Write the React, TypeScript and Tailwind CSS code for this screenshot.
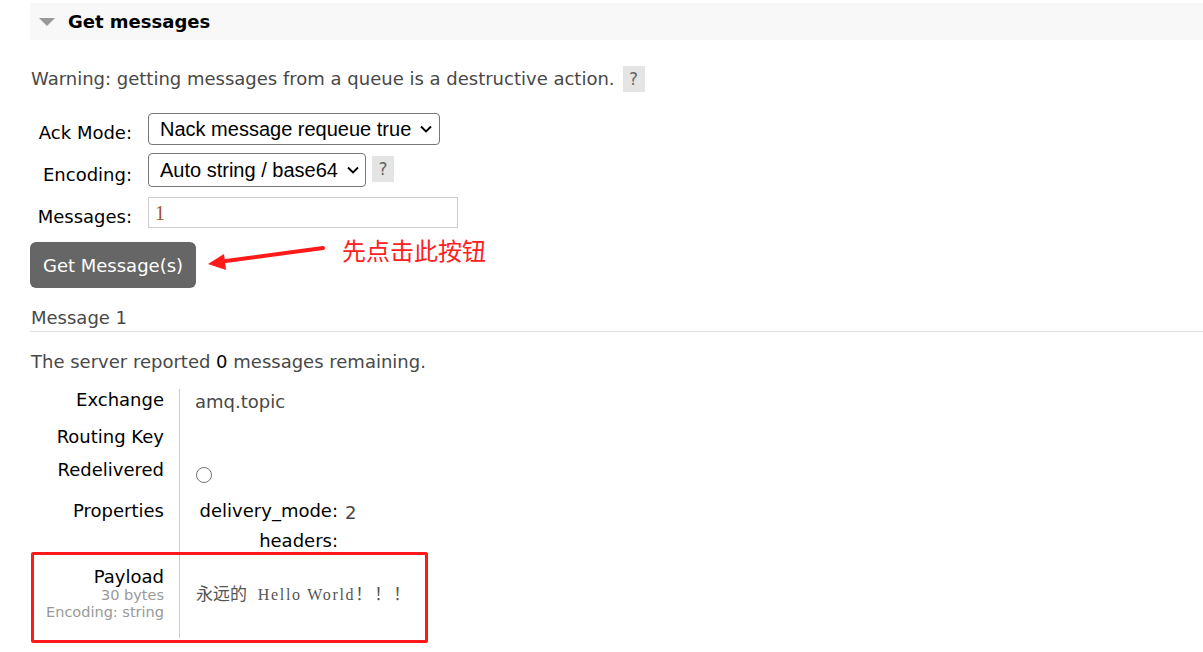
import React from "react";

const V = { fontFamily: '"DejaVu Sans", Verdana, sans-serif' };
const A = { fontFamily: '"Liberation Sans", Arial, sans-serif' };
const CJK = { fontFamily: '"Noto Sans CJK SC", sans-serif' };
const SERIF = { fontFamily: '"Liberation Serif", "Noto Sans CJK SC", serif' };

function Chevron() {
  return (
    <svg width="14" height="10" viewBox="0 0 14 10" className="ml-2">
      <path d="M2 2.5 L7 7.5 L12 2.5" fill="none" stroke="#000" strokeWidth="1.8" />
    </svg>
  );
}

function Help() {
  return (
    <span className="inline-flex items-center justify-center w-[22px] h-[26px] bg-[#e4e4e4] text-[#666] text-[17px]" style={V}>?</span>
  );
}

export default function App() {
  return (
    <div className="w-[1203px] h-[652px] bg-white overflow-hidden relative" style={V}>
      {/* header */}
      <div className="mt-[3px] ml-[30px] h-[37px] bg-[#f8f8f8] flex items-center">
        <svg width="16" height="10" viewBox="0 0 16 10" className="ml-[9px]">
          <path d="M0 1 L16 1 L8 9 Z" fill="#999" />
        </svg>
        <span className="ml-[13px] text-[18px] font-bold text-black">Get messages</span>
      </div>

      {/* warning */}
      <div className="mt-[25px] ml-[31px] flex items-center gap-[8px] text-[18px] leading-[26px] text-[#484848]">
        <span className="pt-[1px]">Warning: getting messages from a queue is a destructive action.</span>
        <Help />
      </div>

      {/* form */}
      <div className="mt-[21px] ml-[30px] flex flex-col text-[18px] leading-[22px] text-black">
        <div className="flex items-start">
          <div className="w-[102px] h-[32px] flex items-center justify-end pt-[8px]">Ack Mode:</div>
          <div className="ml-[16px] h-[32px] w-[292px] border border-[#767676] rounded-[4px] flex items-center pl-[11px] text-[20px] text-black" style={A}>
            <span>Nack message requeue true</span>
            <Chevron />
          </div>
        </div>
        <div className="flex items-start mt-[8px]">
          <div className="w-[102px] h-[34px] flex items-center justify-end pt-[10px]">Encoding:</div>
          <div className="ml-[16px] h-[34px] w-[218px] border border-[#767676] rounded-[4px] flex items-center pl-[11px] text-[20px] text-black" style={A}>
            <span>Auto string / base64</span>
            <Chevron />
          </div>
          <div className="ml-[6px] mt-[3px] flex"><Help /></div>
        </div>
        <div className="flex items-start mt-[10px]">
          <div className="w-[102px] h-[31px] flex items-center justify-end pt-[9px]">Messages:</div>
          <div className="ml-[16px] h-[31px] w-[310px] border border-[#ccc] flex items-center pl-[6px] text-[20px] text-[#a0522d]" style={{ fontFamily: '"Liberation Serif", serif' }}>
            1
          </div>
        </div>
      </div>

      {/* button row */}
      <div className="mt-[14px] ml-[30px] flex items-start">
        <div className="h-[46px] w-[166px] bg-[#666] rounded-[6px] text-white text-[18px] flex items-center justify-center">
          Get Message(s)
        </div>
        <svg width="125" height="30" viewBox="0 0 125 30" className="ml-[10px]">
          <path d="M117 6 L12 20" stroke="#ff1a1a" strokeWidth="4" strokeLinecap="round" />
          <path d="M2 22 L18 12 L20 28 Z" fill="#ff1a1a" />
        </svg>
        <span className="ml-[11px] -mt-[7px] text-[24px] leading-[30px] text-[#ff2020]" style={CJK}>先点击此按钮</span>
      </div>

      {/* Message 1 */}
      <div className="mt-[19px] ml-[30px] border-b border-[#ddd] pb-[2px] pl-[1px] text-[18px] leading-[22px] text-[#484848]">Message 1</div>

      <div className="mt-[19px] ml-[31px] text-[18px] leading-[22px] text-[#484848]">
        The server reported <span className="text-black">0</span> messages remaining.
      </div>

      {/* table */}
      <div className="mt-[16px] ml-[30px] grid grid-cols-[149px_1fr] text-[18px] leading-[22px] text-black">
        <div className="text-right pr-[15px] h-[37px]">Exchange</div>
        <div className="border-l border-[#ccc] pl-[15px] pt-[2px] text-[#484848]">amq.topic</div>

        <div className="text-right pr-[15px] h-[33px]">Routing Key</div>
        <div className="border-l border-[#ccc]"></div>

        <div className="text-right pr-[15px] h-[41px]">Redelivered</div>
        <div className="border-l border-[#ccc] pl-[16px] pt-[8px]">
          <div className="w-[16px] h-[16px] rounded-full border border-[#767676]"></div>
        </div>

        <div className="text-right pr-[15px] h-[52px]">Properties</div>
        <div className="border-l border-[#ccc] pl-[18px]">
          <div className="grid grid-cols-[140px_auto] gap-x-[7px] gap-y-[6px]">
            <div className="text-right">delivery_mode:</div>
            <div className="text-[#484848] pt-[2px]">2</div>
            <div className="text-right">headers:</div>
            <div></div>
          </div>
        </div>

        <div className="text-right pr-[15px] pt-[15px] pb-[17px]">
          <div className="leading-[20px]">Payload</div>
          <div className="text-[14.5px] leading-[17px] text-[#999]">30 bytes</div>
          <div className="text-[14.5px] leading-[17px] text-[#999]">Encoding: string</div>
        </div>
        <div className="border-l border-[#ccc] pl-[16px] pt-[30px] text-[#555] leading-[22px] flex items-baseline">
          <span className="text-[17px]" style={CJK}>永远的</span>
          <span className="pl-[5px] text-[16px] tracking-[1.7px] whitespace-pre" style={SERIF}> Hello World</span>
          <span className="text-[17px] tracking-[2px]" style={CJK}>！！！</span>
        </div>
      </div>

      {/* red annotation box */}
      <div className="absolute left-[31px] top-[552px] w-[397px] h-[91px] border-[3px] border-[#ff1a1a] rounded-[2px]"></div>
    </div>
  );
}
